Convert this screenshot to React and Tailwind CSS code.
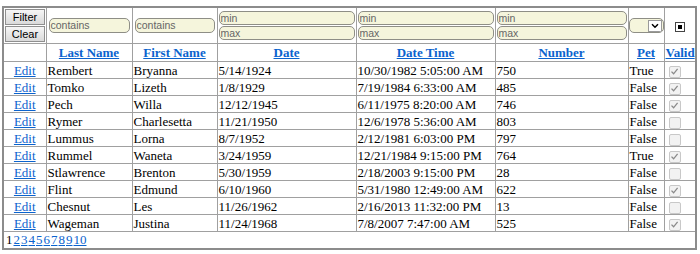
import React from "react";

const rows = [
  ["Rembert", "Bryanna", "5/14/1924", "10/30/1982 5:05:00 AM", "750", "True", true],
  ["Tomko", "Lizeth", "1/8/1929", "7/19/1984 6:33:00 AM", "485", "False", true],
  ["Pech", "Willa", "12/12/1945", "6/11/1975 8:20:00 AM", "746", "False", true],
  ["Rymer", "Charlesetta", "11/21/1950", "12/6/1978 5:36:00 AM", "803", "False", false],
  ["Lummus", "Lorna", "8/7/1952", "2/12/1981 6:03:00 PM", "797", "False", false],
  ["Rummel", "Waneta", "3/24/1959", "12/21/1984 9:15:00 PM", "764", "True", true],
  ["Stlawrence", "Brenton", "5/30/1959", "2/18/2003 9:15:00 PM", "28", "False", false],
  ["Flint", "Edmund", "6/10/1960", "5/31/1980 12:49:00 AM", "622", "False", true],
  ["Chesnut", "Les", "11/26/1962", "2/16/2013 11:32:00 PM", "13", "False", false],
  ["Wageman", "Justina", "11/24/1968", "7/8/2007 7:47:00 AM", "525", "False", true],
];

const headers = ["Last Name", "First Name", "Date", "Date Time", "Number", "Pet", "Valid"];

function Box({ placeholder, tall }) {
  return (
    <div
      className={`${tall ? "h-[15px]" : "h-[14px]"} rounded-[5px] border border-[#8e8e86] bg-[#f5f5dc] px-[1px] text-[10.5px] leading-[12px] text-[#666] font-['Liberation_Sans',Arial,sans-serif]`}
    >
      {placeholder}
    </div>
  );
}

function Check({ on }) {
  return (
    <span className="inline-flex h-[12px] w-[12px] items-center justify-center rounded-[2px] border border-[#c8c8c8] bg-[#f2f2f2] align-middle">
      {on && (
        <svg width="9" height="9" viewBox="0 0 9 9">
          <path d="M1.5 4.6 L3.6 6.8 L7.6 1.8" fill="none" stroke="#8a8a8a" strokeWidth="1.3" />
        </svg>
      )}
    </span>
  );
}

function Btn({ children }) {
  return (
    <div className="flex h-[16px] w-[40px] items-center justify-center border border-[#8f8f8f] bg-gradient-to-b from-[#f6f6f6] to-[#dadada] text-[11px] leading-none text-black font-['Liberation_Sans',Arial,sans-serif]">
      {children}
    </div>
  );
}

export default function App() {
  const line = "border border-[#a0a0a0]";
  const cell = `${line} px-[1px] py-0 h-[17px] leading-[15px]`;
  return (
    <div className="bg-white w-[700px] h-[254px] pt-[6px] pl-[2px] font-['Liberation_Serif','Times_New_Roman',serif] text-[13px] text-black">
      <table className="w-[693px] table-fixed border-collapse border-2 border-[#8c8c8c]">
        <colgroup>
          <col className="w-[43px]" />
          <col className="w-[86px]" />
          <col className="w-[85px]" />
          <col className="w-[139px]" />
          <col className="w-[139px]" />
          <col className="w-[133px]" />
          <col className="w-[36px]" />
          <col className="w-[32px]" />
        </colgroup>
        <tbody>
          {/* filter row */}
          <tr className="h-[36px]">
            <td className={`${line} p-[1px]`}>
              <div className="flex flex-col gap-[1px]">
                <Btn>Filter</Btn>
                <Btn>Clear</Btn>
              </div>
            </td>
            <td className={`${line} px-[2px]`}>
              <Box placeholder="contains" tall />
            </td>
            <td className={`${line} px-[2px]`}>
              <Box placeholder="contains" tall />
            </td>
            {[0, 1, 2].map((i) => (
              <td key={i} className={`${line} px-[1px]`}>
                <div className="flex flex-col gap-[1px]">
                  <Box placeholder="min" />
                  <Box placeholder="max" />
                </div>
              </td>
            ))}
            <td className={`${line} px-0`}>
              <div className="flex h-[15px] items-center rounded-[5px] border border-[#8e8e86] bg-[#f5f5dc] overflow-hidden">
                <div className="flex-1" />
                <div className="mr-[1px] flex h-[12px] w-[14px] items-center justify-center border border-[#9a9a9a] bg-white">
                  <svg width="8" height="6" viewBox="0 0 8 6">
                    <path d="M1 1.2 L4 4.2 L7 1.2" fill="none" stroke="#000" strokeWidth="1.5" />
                  </svg>
                </div>
              </div>
            </td>
            <td className={`${line} text-center`}>
              <span className="inline-flex h-[10px] w-[10px] items-center justify-center border border-[#444] bg-white align-middle">
                <span className="h-[4px] w-[4px] bg-black" />
              </span>
            </td>
          </tr>
          {/* header row */}
          <tr>
            <td className={`${cell} h-[18px]`}></td>
            {headers.map((h) => (
              <td key={h} className={`${cell} h-[18px] text-center font-bold`}>
                <span className="text-[#0b63ce] underline">{h}</span>
              </td>
            ))}
          </tr>
          {rows.map((r) => (
            <tr key={r[0]}>
              <td className={`${cell} text-center`}>
                <span className="text-[#0b63ce] underline">Edit</span>
              </td>
              <td className={cell}>{r[0]}</td>
              <td className={cell}>{r[1]}</td>
              <td className={cell}>{r[2]}</td>
              <td className={cell}>{r[3]}</td>
              <td className={cell}>{r[4]}</td>
              <td className={cell}>{r[5]}</td>
              <td className={`${cell} pl-[4px]`}>
                <Check on={r[6]} />
              </td>
            </tr>
          ))}
          <tr>
            <td colSpan={8} className={`${line} h-[17px] px-[2px] py-0 leading-[15px]`}>
              <div className="flex gap-[1px]">
                <span>1</span>
                {[2, 3, 4, 5, 6, 7, 8, 9, 10].map((n) => (
                  <span key={n} className="text-[#0b63ce] underline">{n}</span>
                ))}
              </div>
            </td>
          </tr>
        </tbody>
      </table>
    </div>
  );
}
